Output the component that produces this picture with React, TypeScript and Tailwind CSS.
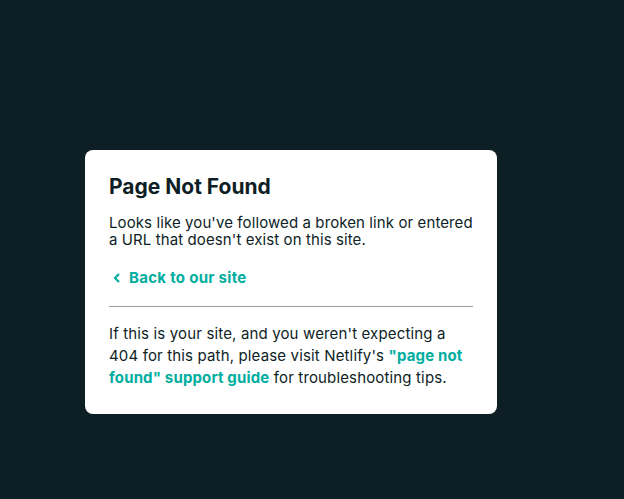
export default function App() {
  return (
    <div className="min-h-screen bg-[#0e1e25] pl-[85px] pt-[150px] font-['Inter',sans-serif] text-[#0e1e25]">
      <div className="w-[412px] rounded-lg bg-white px-6 pb-[25px] pt-[25px]">
        <h1 className="text-[21px] font-bold leading-6">Page Not Found</h1>
        <p className="mt-[15px] text-[15px] leading-[17px] tracking-[0.1px]">
          Looks like you've followed a broken link or entered a URL that doesn't exist on this site.
        </p>
        <a
          href="#"
          className="mt-5 flex items-center gap-2 text-[15px] font-bold leading-5 tracking-[0.3px] text-[#00ad9f]"
        >
          <svg width="8" height="10" viewBox="0 0 8 10" className="ml-1">
            <path d="M6 1 L2 5 L6 9" fill="none" stroke="currentColor" strokeWidth="2.2" />
          </svg>
          Back to our site
        </a>
        <hr className="mt-[18px] border-0 border-t border-[#9d9d9d]" />
        <p className="mt-4 text-[15px] leading-[22px] tracking-[0.15px]">
          If this is your site, and you weren't expecting a 404 for this path, please visit Netlify's{' '}
          <a href="#" className="font-bold text-[#00ad9f]">
            "page not found" support guide
          </a>{' '}
          for troubleshooting tips.
        </p>
      </div>
    </div>
  );
}
